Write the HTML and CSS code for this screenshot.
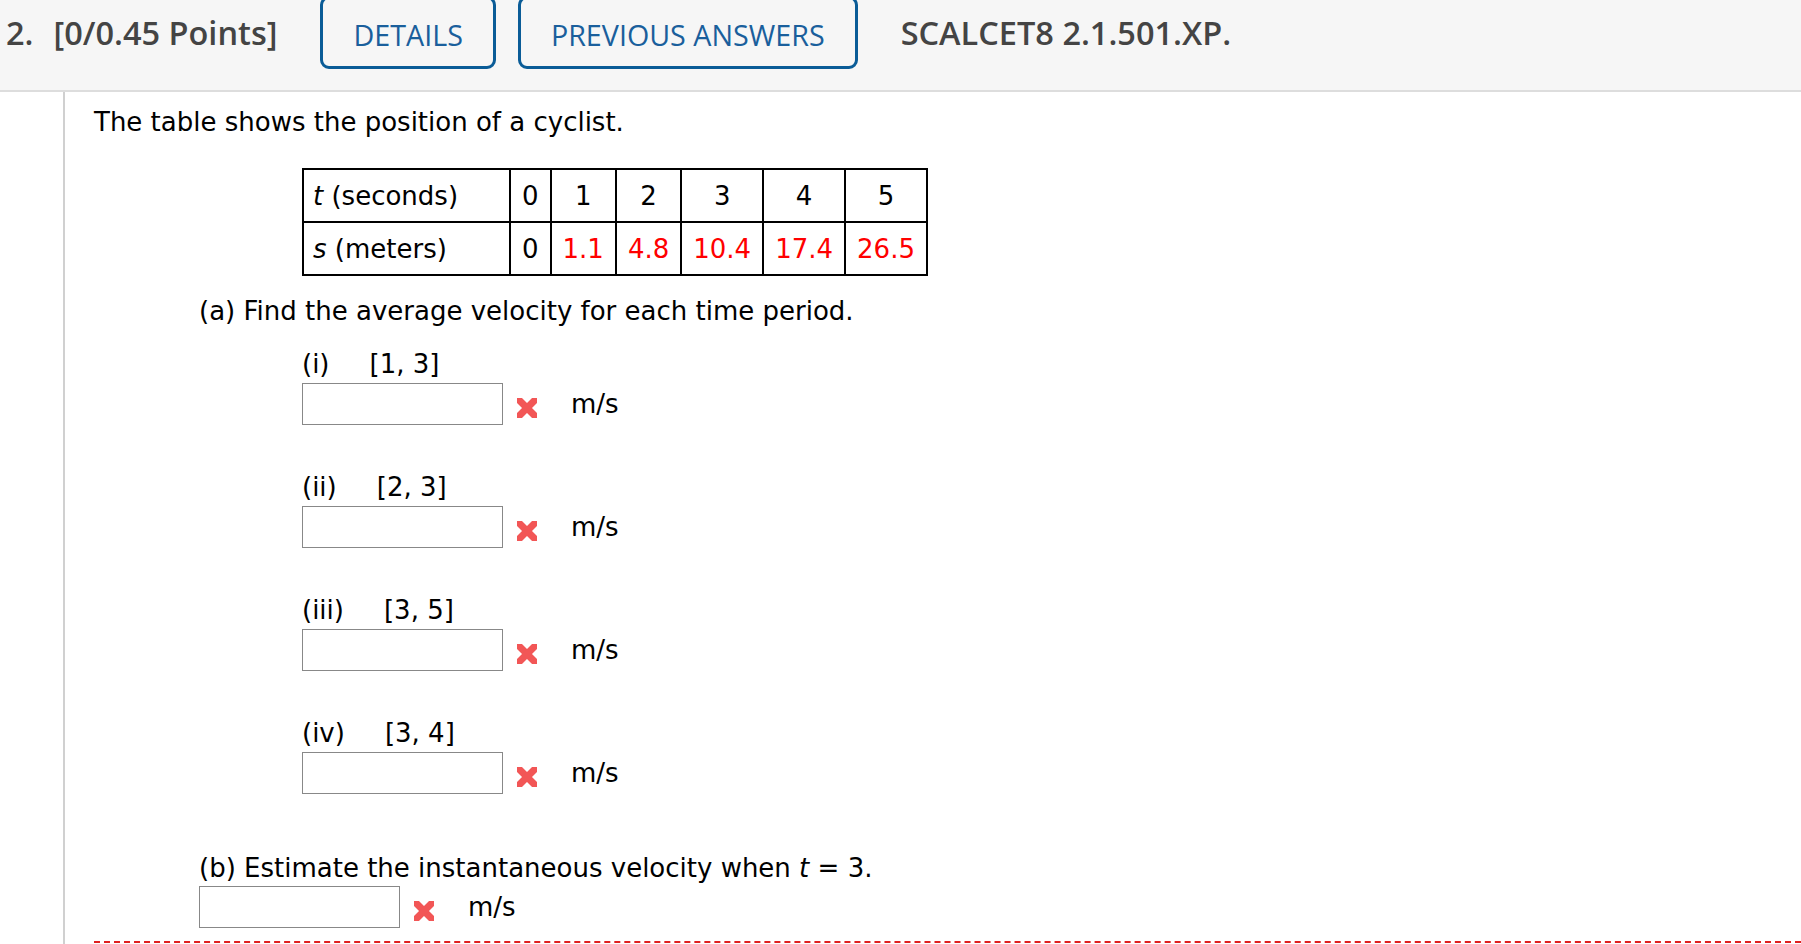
FILE: index.html
```html
<!DOCTYPE html>
<html>
<head>
<meta charset="utf-8">
<link rel="stylesheet" href="styles.css">
</head>
<body>
<div class="header">
  <div class="title"><span class="qnum">2.</span><span>[0/0.45 Points]</span></div>
  <div class="btn btn-details">DETAILS</div>
  <div class="btn btn-prev">PREVIOUS ANSWERS</div>
  <div class="title code">SCALCET8 2.1.501.XP.</div>
</div>
<div class="content">
  <p class="intro">The table shows the position of a cyclist.</p>
  <table class="data">
    <tr>
      <td class="lab"><i>t</i> (seconds)</td>
      <td>0</td><td>1</td><td>2</td><td>3</td><td>4</td><td>5</td>
    </tr>
    <tr>
      <td class="lab"><i>s</i> (meters)</td>
      <td>0</td><td class="red">1.1</td><td class="red">4.8</td><td class="red">10.4</td><td class="red">17.4</td><td class="red">26.5</td>
    </tr>
  </table>
  <p class="part">(a) Find the average velocity for each time period.</p>
  <div class="sub">
    <div class="sublabel"><span class="roman">(i)</span><span>[1, 3]</span></div>
    <div class="answer"><span class="box"></span><svg class="xmark" viewBox="0 0 30 30"><g stroke="#f25656" stroke-width="7" stroke-linecap="round" filter="url(#bl)"><line x1="7" y1="7" x2="23" y2="23"/><line x1="23" y1="7" x2="7" y2="23"/></g></svg><span class="unit">m/s</span></div>
  </div>
  <div class="sub">
    <div class="sublabel"><span class="roman">(ii)</span><span>[2, 3]</span></div>
    <div class="answer"><span class="box"></span><svg class="xmark" viewBox="0 0 30 30"><g stroke="#f25656" stroke-width="7" stroke-linecap="round" filter="url(#bl)"><line x1="7" y1="7" x2="23" y2="23"/><line x1="23" y1="7" x2="7" y2="23"/></g></svg><span class="unit">m/s</span></div>
  </div>
  <div class="sub">
    <div class="sublabel"><span class="roman">(iii)</span><span>[3, 5]</span></div>
    <div class="answer"><span class="box"></span><svg class="xmark" viewBox="0 0 30 30"><g stroke="#f25656" stroke-width="7" stroke-linecap="round" filter="url(#bl)"><line x1="7" y1="7" x2="23" y2="23"/><line x1="23" y1="7" x2="7" y2="23"/></g></svg><span class="unit">m/s</span></div>
  </div>
  <div class="sub">
    <div class="sublabel"><span class="roman">(iv)</span><span>[3, 4]</span></div>
    <div class="answer"><span class="box"></span><svg class="xmark" viewBox="0 0 30 30"><g stroke="#f25656" stroke-width="7" stroke-linecap="round" filter="url(#bl)"><line x1="7" y1="7" x2="23" y2="23"/><line x1="23" y1="7" x2="7" y2="23"/></g></svg><span class="unit">m/s</span></div>
  </div>
  <p class="part partb">(b) Estimate the instantaneous velocity when <i>t</i> = 3.</p>
  <div class="answer answer-b"><span class="box"></span><svg class="xmark" viewBox="0 0 30 30"><g stroke="#f25656" stroke-width="7" stroke-linecap="round" filter="url(#bl)"><line x1="7" y1="7" x2="23" y2="23"/><line x1="23" y1="7" x2="7" y2="23"/></g></svg><span class="unit">m/s</span></div>
  <div class="dash"></div>
</div>
<svg width="0" height="0" class="defs"><defs><filter id="bl"><feGaussianBlur stdDeviation="0.6"/></filter></defs></svg>
</body>
</html>
```
FILE: styles.css
```css
html, body { margin: 0; padding: 0; background: #fff; }
body { font-family: "DejaVu Sans", Verdana, sans-serif; color: #000; overflow: hidden; height: 944px; }

.header {
  display: flex;
  align-items: flex-start;
  height: 90px;
  background: #f6f6f6;
  border-bottom: 2px solid #dddddd;
  padding-left: 6px;
  overflow: hidden;
}
.title {
  font-family: "Open Sans", sans-serif;
  font-weight: 600;
  font-size: 32.5px;
  color: #444;
  line-height: 66px;
  white-space: nowrap;
}
.qnum { margin-right: 20px; }
.btn {
  font-family: "Open Sans", sans-serif;
  font-size: 28.7px;
  color: #1a5f9c;
  border: 3px solid #0a5c97;
  border-radius: 9px;
  height: 63px;
  margin-top: -4px;
  padding: 4px 30px 0;
  line-height: 63px;
  white-space: nowrap;
}
.btn-details { margin-left: 43px; }
.btn-prev { margin-left: 22px; }
.code { margin-left: 43px; }

.content {
  margin-left: 63px;
  border-left: 2px solid #d0d0d0;
  padding-left: 29px;
  height: 852px;
  overflow: hidden;
}
.intro { margin: 0; padding-top: 13px; font-size: 26px; line-height: 34px; }

table.data {
  border-collapse: collapse;
  margin: 29px 0 0 208px;
  font-size: 26px;
}
table.data td {
  border: 2px solid #000;
  height: 51px;
  padding: 0 11px;
  text-align: center;
  white-space: nowrap;
}
table.data td.lab { text-align: left; padding-left: 9px; width: 185px; }
.red { color: #ff0000; }

.part { margin: 18px 0 0 105px; font-size: 26px; line-height: 34px; }
.sub { margin-left: 208px; }
.sub + .sub { margin-top: 45px; }
.part + .sub { margin-top: 19px; }
.sublabel { font-size: 26px; line-height: 34px; }
.roman { margin-right: 40px; }
.answer { display: flex; align-items: center; font-size: 26px; margin-top: 2px; }
.box {
  display: block;
  width: 199px;
  height: 40px;
  border: 1px solid #888;
  background: #fff;
}
.xmark { width: 30px; height: 30px; margin: 7px 0 0 9px; }
.unit { margin-left: 29px; }
.partb { margin-top: 57px; }
.answer-b { margin-left: 105px; margin-top: 1px; }
.dash {
  margin-top: 13px;
  border-top: 2px dashed #e02020;
}
.defs { position: absolute; }
```
